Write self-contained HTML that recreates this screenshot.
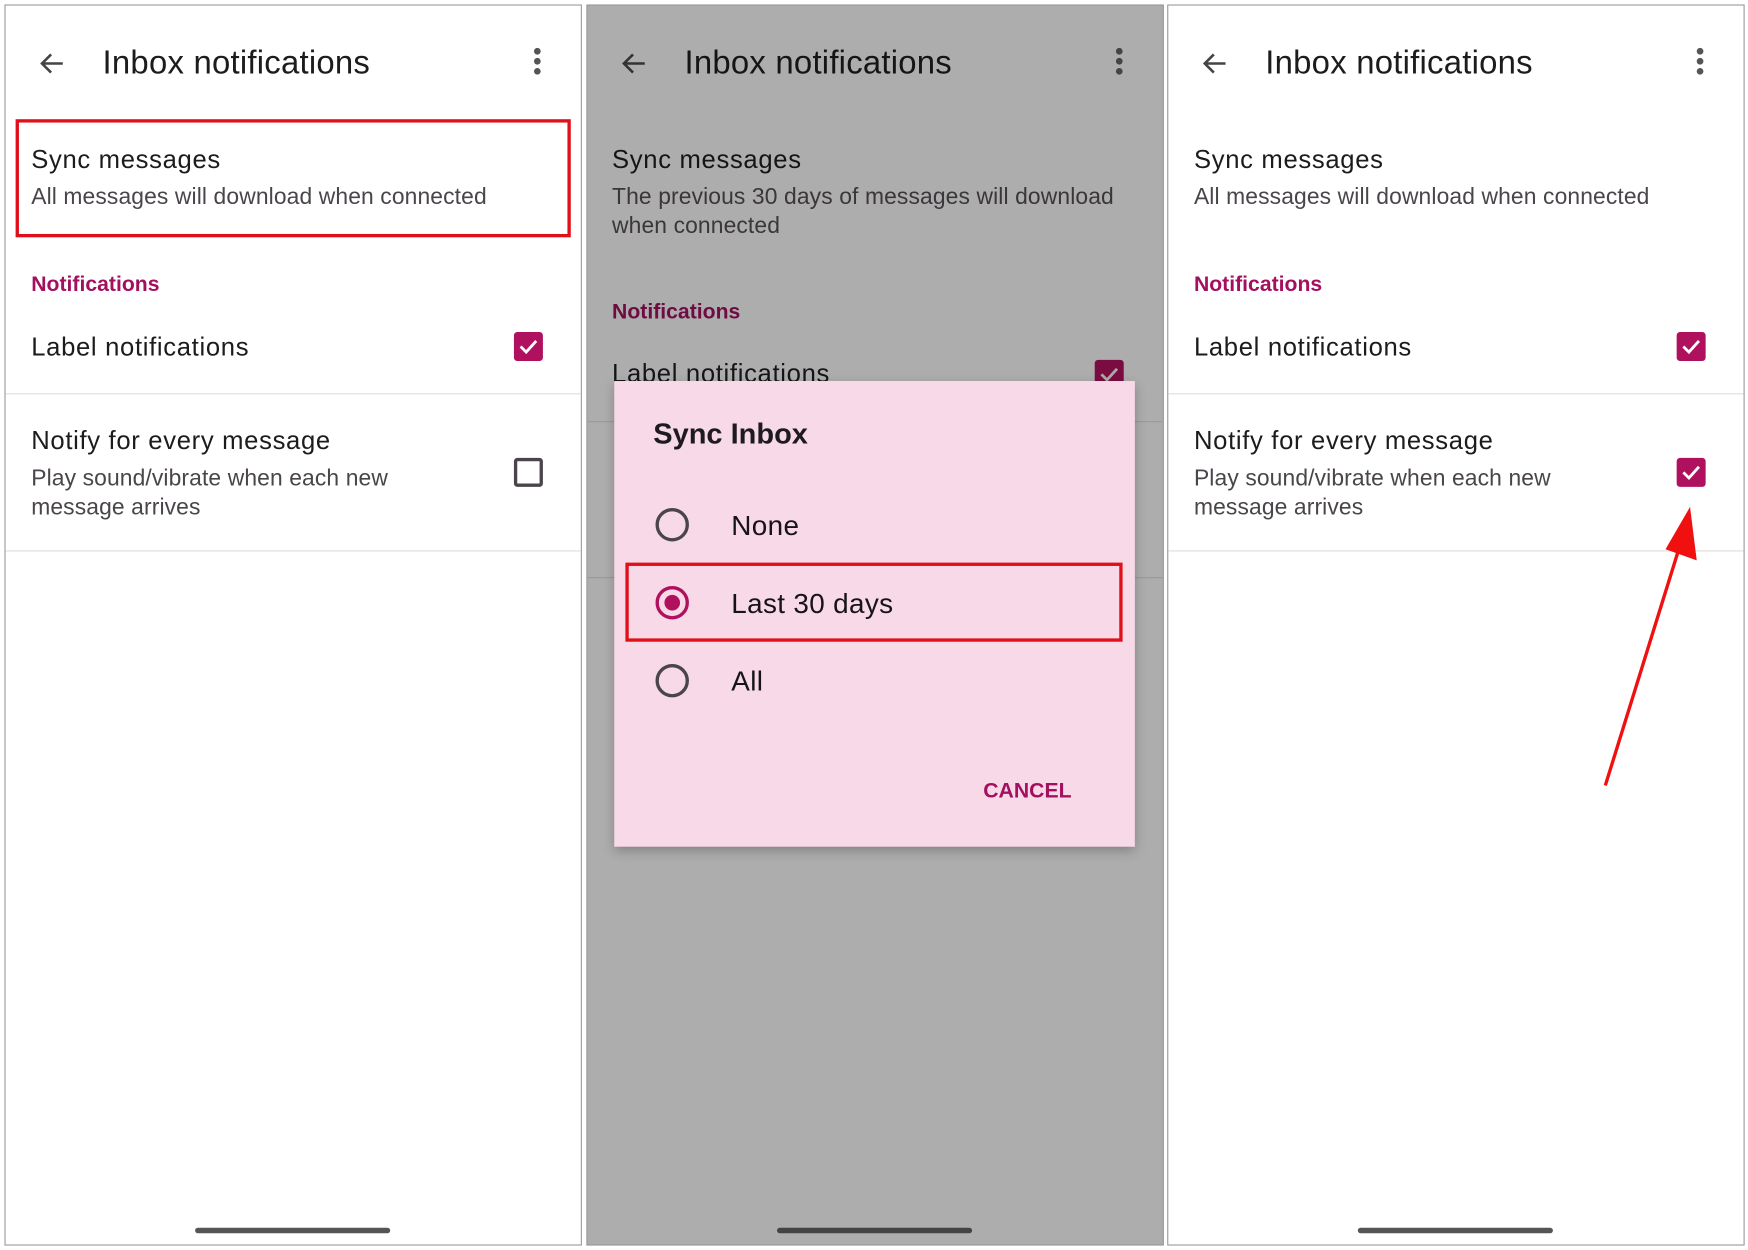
<!DOCTYPE html>
<html><head><meta charset="utf-8"><style>
*{margin:0;padding:0;box-sizing:border-box}
html,body{width:1748px;height:1250px;overflow:hidden;background:#fff}
#w{width:1568px;height:1122px;transform:scale(1.1148,1.1141);transform-origin:0 0;position:relative;font-family:"Liberation Sans",sans-serif;color:#1d1b1e}
.p{position:absolute;top:4px;width:518px;height:1114px;border:1px solid #9a9a9a;background:#fff;overflow:hidden}
.a{position:absolute;white-space:nowrap}
.t{font-size:29.5px;left:87px;top:35px;letter-spacing:0.2px}
.h{font-size:23px;letter-spacing:0.6px}
.s{font-size:20.5px;color:#4a454a;line-height:26px;letter-spacing:0.1px}
.n{font-size:19px;color:#a3105f;font-weight:bold}
.cb{position:absolute;width:26px;height:26px;border-radius:3px;background:#b0115e}
.ub{position:absolute;width:26px;height:26px;border-radius:3px;border:3px solid #4a454a}
.dv{position:absolute;left:0;right:0;height:1px;background:#ddd}
.bar{position:absolute;left:170px;top:1097px;width:175px;height:5px;border-radius:3px;background:#555}
.rd{position:absolute;width:30px;height:30px;border-radius:50%;border:3px solid #4a454a}
</style></head><body><div id="w">

<!-- panel 1 -->
<div class="p" style="left:4px">
<svg class="a" style="left:28px;top:38px" width="28" height="28" viewBox="0 0 24 24"><path d="M20 12H5M11 5l-7 7 7 7" stroke="#444" stroke-width="2" fill="none"/></svg>
<div class="a t">Inbox notifications</div>
<svg class="a" style="left:472px;top:36px" width="10" height="28"><circle cx="5" cy="5" r="3" fill="#555"/><circle cx="5" cy="14" r="3" fill="#555"/><circle cx="5" cy="23" r="3" fill="#555"/></svg>
<div class="a" style="left:9px;top:102px;width:498px;height:106px;border:3px solid #e0101a"></div>
<div class="a h" style="left:23px;top:125px">Sync messages</div>
<div class="a s" style="left:23px;top:159px">All messages will download when connected</div>
<div class="a n" style="left:23px;top:240px">Notifications</div>
<div class="a h" style="left:23px;top:293px">Label notifications</div>
<div class="cb" style="left:456px;top:293px"><svg width="26" height="26"><path d="M6 13l5 5 9-10" stroke="#fff" stroke-width="2.5" fill="none"/></svg></div>
<div class="dv" style="top:348px"></div>
<div class="a h" style="left:23px;top:377px">Notify for every message</div>
<div class="a s" style="left:23px;top:412px">Play sound/vibrate when each new<br>message arrives</div>
<div class="ub" style="left:456px;top:406px"></div>
<div class="dv" style="top:489px"></div>
<div class="bar"></div>
</div>

<!-- panel 2 -->
<div class="p" style="left:526px;background:#adadad;color:#161416">
<svg class="a" style="left:28px;top:38px" width="28" height="28" viewBox="0 0 24 24"><path d="M20 12H5M11 5l-7 7 7 7" stroke="#333" stroke-width="2" fill="none"/></svg>
<div class="a t">Inbox notifications</div>
<svg class="a" style="left:472px;top:36px" width="10" height="28"><circle cx="5" cy="5" r="3" fill="#444"/><circle cx="5" cy="14" r="3" fill="#444"/><circle cx="5" cy="23" r="3" fill="#444"/></svg>
<div class="a h" style="left:22px;top:125px">Sync messages</div>
<div class="a s" style="left:22px;top:159px;color:#3a363a">The previous 30 days of messages will download<br>when connected</div>
<div class="a n" style="left:22px;top:265px;color:#6e0b42">Notifications</div>
<div class="a h" style="left:22px;top:317px">Label notifications</div>
<div class="cb" style="left:455px;top:318px;background:#7a0c42"><svg width="26" height="26"><path d="M6 13l5 5 9-10" stroke="#aaa" stroke-width="2.5" fill="none"/></svg></div>
<div class="dv" style="top:373px;background:#999"></div>
<div class="dv" style="top:513px;background:#999"></div>
<div class="a" style="left:24px;top:337px;width:467px;height:418px;background:#f8d9e7;box-shadow:0 4px 10px rgba(0,0,0,.25)">
<div class="a" style="left:35px;top:32px;font-size:26px;font-weight:bold;color:#1d1b1e">Sync Inbox</div>
<div class="rd" style="left:37px;top:114px"></div>
<div class="a h" style="left:105px;top:116px;font-size:25px;letter-spacing:0.3px">None</div>
<div class="rd" style="left:37px;top:184px;border-color:#b0115e"><div style="position:absolute;left:5px;top:5px;width:14px;height:14px;border-radius:50%;background:#b0115e"></div></div>
<div class="a h" style="left:105px;top:186px;font-size:25px;letter-spacing:0.3px">Last 30 days</div>
<div class="rd" style="left:37px;top:254px"></div>
<div class="a h" style="left:105px;top:256px;font-size:25px;letter-spacing:0.3px">All</div>
<div class="a" style="left:10px;top:163px;width:446px;height:71px;border:3px solid #e0101a"></div>
<div class="a" style="left:331px;top:358px;font-size:19px;font-weight:bold;color:#a3105f">CANCEL</div>
</div>
<div class="bar" style="background:#444"></div>
</div>

<!-- panel 3 -->
<div class="p" style="left:1047px">
<svg class="a" style="left:28px;top:38px" width="28" height="28" viewBox="0 0 24 24"><path d="M20 12H5M11 5l-7 7 7 7" stroke="#444" stroke-width="2" fill="none"/></svg>
<div class="a t">Inbox notifications</div>
<svg class="a" style="left:472px;top:36px" width="10" height="28"><circle cx="5" cy="5" r="3" fill="#555"/><circle cx="5" cy="14" r="3" fill="#555"/><circle cx="5" cy="23" r="3" fill="#555"/></svg>
<div class="a h" style="left:23px;top:125px">Sync messages</div>
<div class="a s" style="left:23px;top:159px">All messages will download when connected</div>
<div class="a n" style="left:23px;top:240px">Notifications</div>
<div class="a h" style="left:23px;top:293px">Label notifications</div>
<div class="cb" style="left:456px;top:293px"><svg width="26" height="26"><path d="M6 13l5 5 9-10" stroke="#fff" stroke-width="2.5" fill="none"/></svg></div>
<div class="dv" style="top:348px"></div>
<div class="a h" style="left:23px;top:377px">Notify for every message</div>
<div class="a s" style="left:23px;top:412px">Play sound/vibrate when each new<br>message arrives</div>
<div class="cb" style="left:456px;top:406px"><svg width="26" height="26"><path d="M6 13l5 5 9-10" stroke="#fff" stroke-width="2.5" fill="none"/></svg></div>
<div class="dv" style="top:489px"></div>
<svg class="a" style="left:0;top:0" width="518" height="1114"><path d="M392 700L461 478" stroke="#f01010" stroke-width="3" fill="none"/><path d="M468 450L474 498L446 488Z" fill="#f01010"/></svg>
<div class="bar"></div>
</div>

</div></body></html>
